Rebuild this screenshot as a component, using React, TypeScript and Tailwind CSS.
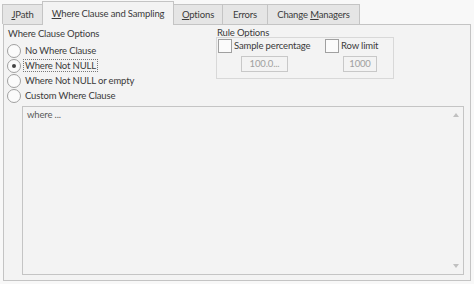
import React from "react";

const tabs = [
  { key: "jpath", u: "J", post: "Path", w: "w-[41px]" },
  { key: "where", u: "W", post: "here Clause and Sampling", w: "w-[132px]", active: true },
  { key: "options", u: "O", post: "ptions", w: "w-[50px]" },
  { key: "errors", pre: "Errors", w: "w-[46px]" },
  { key: "cm", pre: "Change ", u: "M", post: "anagers", w: "w-[93px]" },
];

const radios = ["No Where Clause", "Where Not NULL", "Where Not NULL or empty", "Custom Where Clause"];

function Radio({ label, checked }: { label: string; checked?: boolean }) {
  return (
    <div className="flex items-center h-[15px]">
      <div className="w-[14px] h-[14px] rounded-full border border-[#a0a0a0] bg-[#fbfbfb] flex items-center justify-center">
        {checked && <div className="w-[4px] h-[4px] rounded-full bg-[#444]" />}
      </div>
      <span
        className={
          "ml-[2px] px-[1px] leading-[11px] whitespace-nowrap " +
          (checked ? "border border-dotted border-[#777]" : "border border-transparent")
        }
      >
        {label}
      </span>
    </div>
  );
}

function Check({ label }: { label: string }) {
  return (
    <div className="flex items-center h-[14px]">
      <div className="w-[14px] h-[14px] border border-[#a0a0a0] bg-[#fbfbfb]" />
      <span className="ml-[2px] whitespace-nowrap">{label}</span>
    </div>
  );
}

export default function App() {
  return (
    <div className="w-[474px] h-[284px] bg-[#f8f8f8] text-[9.5px] tracking-[-0.15px] leading-[12px] text-[#3a3a3a] font-['Lato','Noto_Sans',sans-serif] overflow-hidden">
      <div className="flex items-end h-[24px] pl-[2px]">
        {tabs.map((t) => (
          <div
            key={t.key}
            className={
              t.active
                ? `${t.w} h-[24px] -mb-px -ml-px relative z-10 bg-[#f3f3f3] border border-b-0 border-[#c4c4c4] flex items-center justify-center pt-[1px]`
                : `${t.w} h-[20px] -ml-px first:ml-0 bg-[#e5e5e5] border border-b-0 border-[#c4c4c4] flex items-center justify-center`
            }
          >
            <span className="whitespace-nowrap">
              {t.pre}
              {t.u && <span className="underline">{t.u}</span>}
              {t.post}
            </span>
          </div>
        ))}
      </div>
      <div className="mx-[3px] h-[257px] border border-[#c4c4c4] bg-[#f3f3f3] pl-[3px] pr-[6px] pt-[3px]">
        <div className="flex">
          <div className="w-[209px]">
            <div className="h-[15px] pl-[1px] whitespace-nowrap">Where Clause Options</div>
            <div className="flex flex-col">
              {radios.map((r, i) => (
                <Radio key={r} label={r} checked={i === 1} />
              ))}
            </div>
          </div>
          <div className="flex flex-col">
            <div className="h-[9px] pl-[1px] leading-[10px] whitespace-nowrap">Rule Options</div>
            <div className="w-[178px] h-[42px] border border-[#d8d8d8] pl-px pt-[1px]">
              <div className="flex">
                <div className="w-[107px]">
                  <Check label="Sample percentage" />
                </div>
                <Check label="Row limit" />
              </div>
              <div className="flex mt-[3px]">
                <div className="ml-[23px] w-[47px] h-[16px] border border-[#c8c8c8] flex items-center justify-center text-[#a0a0a0]">
                  100.0...
                </div>
                <div className="ml-[55px] w-[34px] h-[16px] border border-[#c8c8c8] flex items-center justify-center text-[#a0a0a0]">
                  1000
                </div>
              </div>
            </div>
          </div>
        </div>
        <div className="ml-[15px] mt-[3px] h-[169px] border border-[#c4c4c4] flex">
          <div className="flex-1 pl-[4px] pt-[2px] text-[#5a5a5a]">where ...</div>
          <div className="w-[14px] flex flex-col items-center justify-between py-[6px]">
            <svg width="6" height="4" viewBox="0 0 6 4">
              <path d="M0 4 L3 0 L6 4 Z" fill="#c0c0c0" />
            </svg>
            <svg width="6" height="4" viewBox="0 0 6 4">
              <path d="M0 0 L3 4 L6 0 Z" fill="#c0c0c0" />
            </svg>
          </div>
        </div>
      </div>
    </div>
  );
}
